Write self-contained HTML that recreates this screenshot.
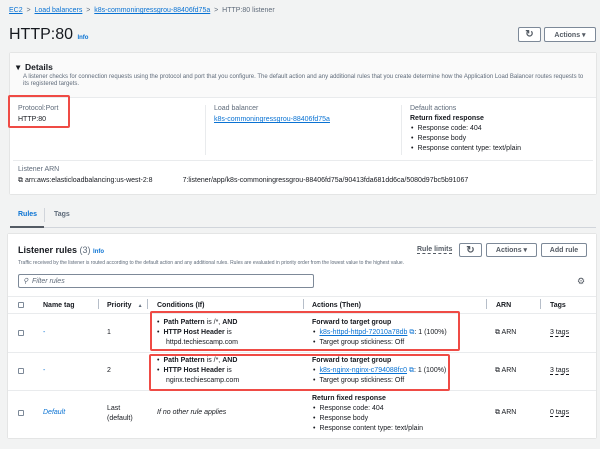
<!DOCTYPE html>
<html><head><style>
*{margin:0;padding:0;box-sizing:border-box}
body{width:600px;height:449px;overflow:hidden;background:#f2f3f3;font-family:"Liberation Sans",sans-serif;color:#16191f;font-size:7px;position:relative}
.a{position:absolute;white-space:nowrap}
.lk{color:#0972d3;text-decoration:underline}
.mut{color:#5f6b7a}
.b{font-weight:bold}
.btn{position:absolute;border:1px solid #7d8998;border-radius:2px;background:#fff;font-weight:bold;color:#545b64;display:flex;align-items:center;justify-content:center;font-size:7px}
.panel{position:absolute;background:#fff;box-shadow:0 0 1px rgba(0,0,0,.3)}
.red{position:absolute;border:2px solid #ef4b45;border-radius:2px}
.vs{position:absolute;width:1px;background:#e9ebed}
.hs{position:absolute;height:1px;background:#e9ebed}
.cb{position:absolute;width:6px;height:6px;border:1px solid #7d8998;border-radius:1px;background:#fff}
.dot::before{content:"•";margin-right:4px}
</style></head><body>
<div class="a" style="left:9px;top:7px"><span class="lk">EC2</span> <span class="mut">&nbsp;&gt;&nbsp;</span> <span class="lk">Load balancers</span> <span class="mut">&nbsp;&gt;&nbsp;</span> <span class="lk">k8s-commoningressgrou-88406fd75a</span> <span class="mut">&nbsp;&gt;&nbsp;</span> <span class="mut">HTTP:80 listener</span></div>
<div class="a" style="left:9px;top:26px;font-size:16px">HTTP:80 <span style="font-size:6px;color:#0972d3;font-weight:bold">Info</span></div>
<div class="btn" style="left:518px;top:27px;width:23px;height:15px;font-size:10px">↻</div>
<div class="btn" style="left:544px;top:27px;width:52px;height:15px">Actions ▾</div>

<div class="panel" style="left:10px;top:53px;width:586px;height:141px">
 <div style="position:absolute;left:0;top:0;width:586px;height:45px;background:#fafafa;border-bottom:1px solid #e9ebed"></div>
 <div class="a b" style="left:6px;top:9px;font-size:8.5px">▾&nbsp; Details</div>
 <div class="a mut" style="left:13px;top:21px;font-size:6px;line-height:7px;white-space:normal;width:565px">A listener checks for connection requests using the protocol and port that you configure. The default action and any additional rules that you create determine how the Application Load Balancer routes requests to its registered targets.</div>
 <div class="a mut" style="left:8px;top:52px">Protocol:Port</div>
 <div class="a" style="left:8px;top:63px">HTTP:80</div>
 <div class="vs" style="left:195px;top:52px;height:50px"></div>
 <div class="a mut" style="left:204px;top:52px">Load balancer</div>
 <div class="a lk" style="left:204px;top:63px">k8s-commoningressgrou-88406fd75a</div>
 <div class="vs" style="left:391px;top:52px;height:50px"></div>
 <div class="a mut" style="left:400px;top:52px">Default actions</div>
 <div class="a b" style="left:400px;top:62px">Return fixed response</div>
 <div class="a dot" style="left:401px;top:72px">Response code: 404</div>
 <div class="a dot" style="left:401px;top:82px">Response body</div>
 <div class="a dot" style="left:401px;top:92px">Response content type: text/plain</div>
 <div class="hs" style="left:3px;top:107px;width:580px"></div>
 <div class="a mut" style="left:8px;top:113px">Listener ARN</div>
 <div class="a" style="left:8px;top:124px">⧉ arn:aws:elasticloadbalancing:us-west-2:8<span style="display:inline-block;width:30px"></span>7:listener/app/k8s-commoningressgrou-88406fd75a/90413fda681dd6ca/5080d97bc5b91067</div>
</div>
<div class="red" style="left:8px;top:95px;width:62px;height:33px"></div>

<div class="a b" style="left:18px;top:211px;color:#0972d3">Rules</div>
<div class="a b mut" style="left:54px;top:211px">Tags</div>
<div class="vs" style="left:44px;top:208px;height:14px;background:#d1d5db"></div>
<div class="hs" style="left:10px;top:227px;width:586px;background:#d1d5db"></div>
<div style="position:absolute;left:10px;top:226px;width:34px;height:2px;background:#545b64"></div>

<div class="panel" style="left:8px;top:234px;width:588px;height:204px"></div>
<div class="a b" style="left:18px;top:245px;font-size:9px">Listener rules <span style="font-weight:normal" class="mut">(3)</span> <span style="font-size:6px;color:#0972d3">Info</span></div>
<div class="a mut" style="left:18px;top:260px;font-size:5px">Traffic received by the listener is routed according to the default action and any additional rules. Rules are evaluated in priority order from the lowest value to the highest value.</div>
<div class="a b" style="left:417px;top:246px;color:#545b64;border-bottom:1px dashed #545b64">Rule limits</div>
<div class="btn" style="left:459px;top:243px;width:23px;height:14px;font-size:10px">↻</div>
<div class="btn" style="left:486px;top:243px;width:51px;height:14px">Actions ▾</div>
<div class="btn" style="left:541px;top:243px;width:46px;height:14px">Add rule</div>
<div style="position:absolute;left:18px;top:274px;width:296px;height:14px;border:1px solid #7d8998;border-radius:2px"></div>
<div class="a mut" style="left:23px;top:277px;font-style:italic">⚲ &nbsp;Filter rules</div>
<div class="a" style="left:577px;top:276px;font-size:9px;color:#545b64">⚙</div>

<div class="hs" style="left:8px;top:296px;width:588px"></div>
<div class="cb" style="left:18px;top:302px"></div>
<div class="a b" style="left:43px;top:302px">Name tag</div>
<div class="vs" style="left:98px;top:299px;height:10px;background:#b6bec9"></div>
<div class="a b" style="left:107px;top:302px">Priority <span class="mut" style="font-size:5px">&nbsp;&nbsp;&nbsp;▲</span></div>
<div class="vs" style="left:147px;top:299px;height:10px;background:#b6bec9"></div>
<div class="a b" style="left:157px;top:302px">Conditions (If)</div>
<div class="vs" style="left:303px;top:299px;height:10px;background:#b6bec9"></div>
<div class="a b" style="left:312px;top:302px">Actions (Then)</div>
<div class="vs" style="left:486px;top:299px;height:10px;background:#b6bec9"></div>
<div class="a b" style="left:496px;top:302px">ARN</div>
<div class="vs" style="left:540px;top:299px;height:10px;background:#b6bec9"></div>
<div class="a b" style="left:550px;top:302px">Tags</div>
<div class="hs" style="left:8px;top:313px;width:588px"></div>

<div class="cb" style="left:18px;top:330px"></div>
<div class="a lk" style="left:43px;top:329px;text-decoration:none">-</div>
<div class="a" style="left:107px;top:329px">1</div>
<div class="a dot" style="left:157px;top:319px"><b>Path Pattern</b> is /*, <b>AND</b></div>
<div class="a dot" style="left:157px;top:329px"><b>HTTP Host Header</b> is</div>
<div class="a" style="left:166px;top:339px">httpd.techiescamp.com</div>
<div class="a b" style="left:312px;top:319px">Forward to target group</div>
<div class="a dot" style="left:313px;top:329px"><span class="lk">k8s-httpd-httpd-72010a78db</span> <span style="color:#0972d3">⧉</span>: 1 (100%)</div>
<div class="a dot" style="left:313px;top:339px">Target group stickiness: Off</div>
<div class="a" style="left:495px;top:329px">⧉ ARN</div>
<div class="a" style="left:550px;top:329px;border-bottom:1px dashed #16191f">3 tags</div>
<div class="hs" style="left:8px;top:352px;width:588px"></div>

<div class="cb" style="left:18px;top:368px"></div>
<div class="a lk" style="left:43px;top:367px;text-decoration:none">-</div>
<div class="a" style="left:107px;top:367px">2</div>
<div class="a dot" style="left:157px;top:357px"><b>Path Pattern</b> is /*, <b>AND</b></div>
<div class="a dot" style="left:157px;top:367px"><b>HTTP Host Header</b> is</div>
<div class="a" style="left:166px;top:377px">nginx.techiescamp.com</div>
<div class="a b" style="left:312px;top:357px">Forward to target group</div>
<div class="a dot" style="left:313px;top:367px"><span class="lk">k8s-nginx-nginx-c794088fc0</span> <span style="color:#0972d3">⧉</span>: 1 (100%)</div>
<div class="a dot" style="left:313px;top:377px">Target group stickiness: Off</div>
<div class="a" style="left:495px;top:367px">⧉ ARN</div>
<div class="a" style="left:550px;top:367px;border-bottom:1px dashed #16191f">3 tags</div>
<div class="hs" style="left:8px;top:390px;width:588px"></div>

<div class="cb" style="left:18px;top:410px"></div>
<div class="a" style="left:43px;top:409px;color:#0972d3;font-style:italic">Default</div>
<div class="a" style="left:107px;top:404px;line-height:10px">Last<br>(default)</div>
<div class="a" style="left:157px;top:409px;font-style:italic">If no other rule applies</div>
<div class="a b" style="left:312px;top:395px">Return fixed response</div>
<div class="a dot" style="left:313px;top:405px">Response code: 404</div>
<div class="a dot" style="left:313px;top:415px">Response body</div>
<div class="a dot" style="left:313px;top:425px">Response content type: text/plain</div>
<div class="a" style="left:495px;top:409px">⧉ ARN</div>
<div class="a" style="left:550px;top:409px;border-bottom:1px dashed #16191f">0 tags</div>

<div class="red" style="left:150px;top:311px;width:310px;height:40px"></div>
<div class="red" style="left:149px;top:354px;width:301px;height:37px"></div>
</body></html>
